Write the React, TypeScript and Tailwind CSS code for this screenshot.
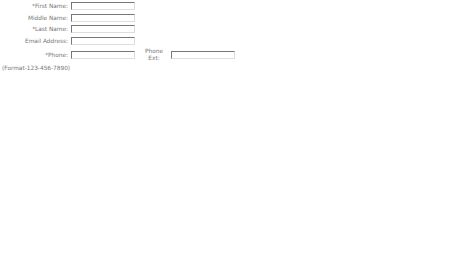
const ROWS = [
  { label: '*First Name:' },
  { label: 'Middle Name:' },
  { label: '*Last Name:' },
  { label: 'Email Address:' },
]

function Field() {
  return (
    <input
      type="text"
      className="block h-[8px] w-[64px] border border-t-[#777] border-l-[#777] border-b-[#ddd] border-r-[#ddd] bg-white p-0 outline-none"
    />
  )
}

export default function App() {
  return (
    <div className="min-h-[266px] w-[474px] bg-white text-[5.8px] leading-[8px] text-[#777]" style={{ fontFamily: '"DejaVu Sans", Verdana, sans-serif' }}>
      <div className="pt-[2px]">
        <div className="flex flex-col gap-[3.5px]">
          {ROWS.map((r) => (
            <div key={r.label} className="flex items-center">
              <div className="w-[71px] pr-[3px] text-right">{r.label}</div>
              <Field />
            </div>
          ))}
        </div>
        <div className="mt-[3px] flex items-center">
          <div className="w-[71px] pr-[3px] text-right">*Phone:</div>
          <Field />
          <div className="ml-[10px] w-[18px] text-center leading-[7px]">
            Phone
            <br />
            Ext:
          </div>
          <div className="ml-[8px]">
            <Field />
          </div>
        </div>
        <div className="mt-[2px] pl-[2px]">(Format-123-456-7890)</div>
      </div>
    </div>
  )
}
